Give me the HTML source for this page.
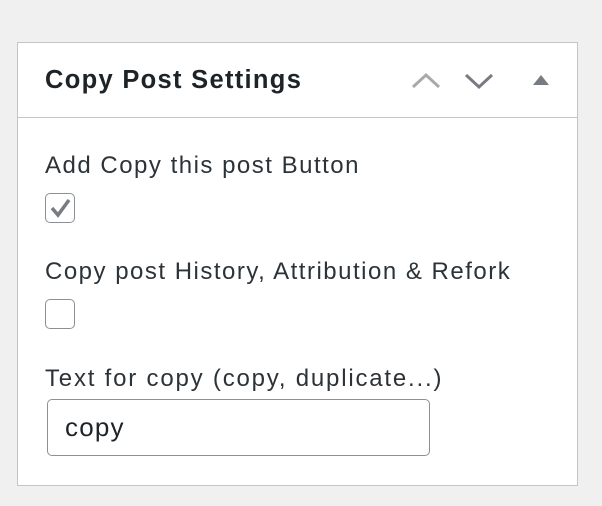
<!DOCTYPE html>
<html><head><style>
body{margin:0;width:602px;height:506px;background:#f0f0f1;font-family:"Liberation Sans",sans-serif;color:#1d2327;position:relative;overflow:hidden}
.box{position:absolute;left:17px;top:42px;width:559px;height:442px;background:#fff;border:1px solid #c3c4c7}
.hd{position:absolute;left:0;top:0;width:559px;height:74px;border-bottom:1px solid #c3c4c7}
.t{position:absolute;left:27px;top:23px;font-size:25.5px;font-weight:bold;letter-spacing:1.3px}
.l{position:absolute;left:27px;font-size:24px;color:#2c3338;letter-spacing:1.5px}
.cb{position:absolute;left:27px;width:28px;height:28px;border:1.5px solid #8c8f94;border-radius:5px;box-sizing:content-box}
.in{position:absolute;left:29px;top:356px;width:381px;height:55px;border:1.5px solid #8c8f94;border-radius:5px}
.in span{position:absolute;left:17px;top:12px;font-size:26px;color:#1d2327;letter-spacing:1.2px}
svg{position:absolute}
</style></head><body>
<div class="box">
<div class="hd">
<div class="t">Copy Post Settings</div>
<svg style="left:392px;top:28px" width="32" height="20"><path d="M3 16 L16 4 L29 16" fill="none" stroke="#a7aaad" stroke-width="3"/></svg>
<svg style="left:445px;top:28px" width="32" height="20"><path d="M3 4 L16 16 L29 4" fill="none" stroke="#787c82" stroke-width="3"/></svg>
<svg style="left:514px;top:30px" width="18" height="14"><path d="M1 12 L9 2 L17 12 Z" fill="#787c82"/></svg>
</div>
<div class="l" style="top:109px">Add Copy this post Button</div>
<div class="cb" style="top:150px"><svg style="left:3px;top:3px" width="22" height="22"><path d="M3 11 L9 18 L20 3" fill="none" stroke="#787c82" stroke-width="3.5"/></svg></div>
<div class="l" style="top:215px">Copy post History, Attribution &amp; Refork</div>
<div class="cb" style="top:256px"></div>
<div class="l" style="top:322px;letter-spacing:1.8px">Text for copy (copy, duplicate...)</div>
<div class="in"><span>copy</span></div>
</div>
</body></html>
